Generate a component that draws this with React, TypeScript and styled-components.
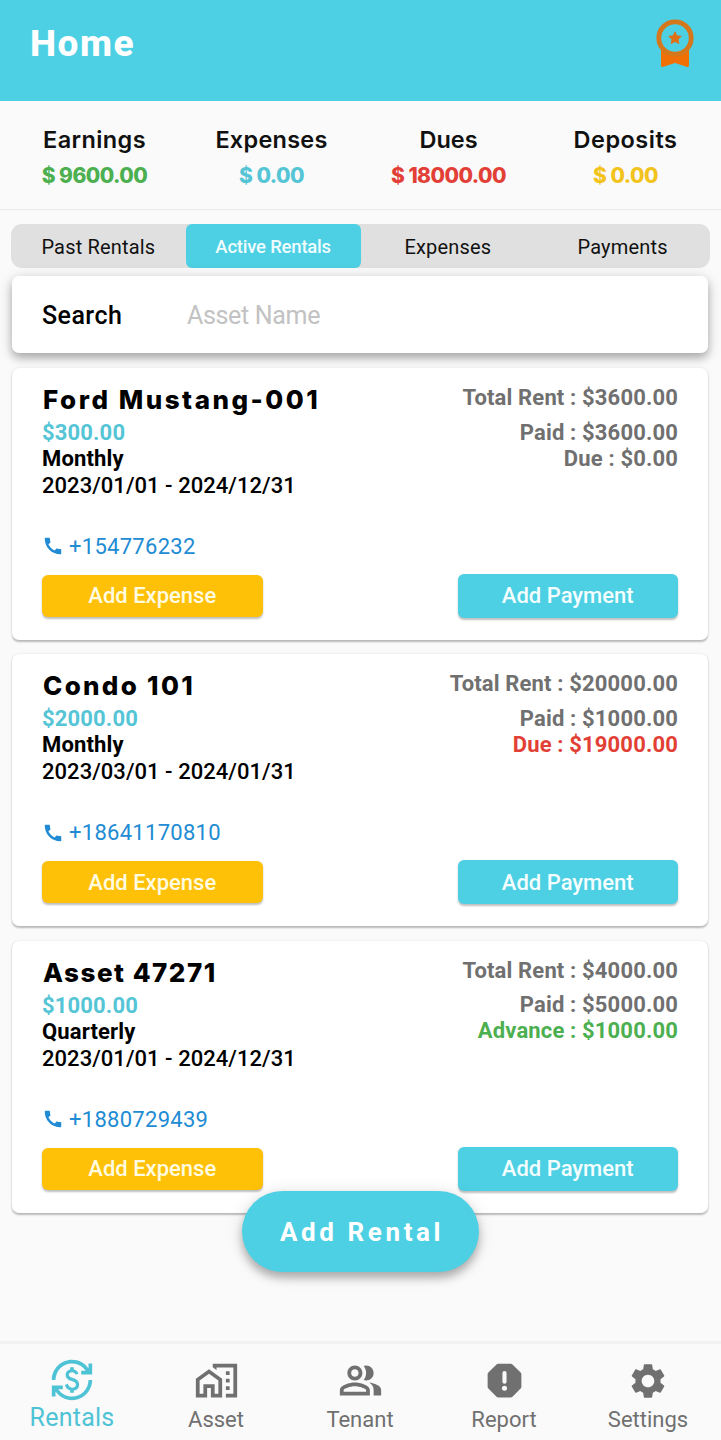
import React from "react";
import styled, { createGlobalStyle } from "styled-components";
import { MdCall, MdCurrencyExchange, MdOutlineHomeWork, MdSettings } from "react-icons/md";

const CYAN = "#4dd0e3";
const AMBER = "#fec107";
const GREEN = "#4caf50";
const RED = "#e23f36";
const GREY = "#707070";

const GlobalStyle = createGlobalStyle`
  * { box-sizing: border-box; }
  body { margin: 0; background: #fafafa; font-family: Roboto, sans-serif; color: #000; }
  button { border: 0; padding: 0; font-family: inherit; }
`;

const Screen = styled.div`
  position: relative;
  display: flex;
  flex-direction: column;
  width: 721px;
  height: 1440px;
  overflow: hidden;
  background: #fafafa;
`;

const Header = styled.header`
  display: flex;
  flex: none;
  justify-content: space-between;
  align-items: flex-start;
  height: 101px;
  padding: 19px 26px 0 30px;
  background: ${CYAN};
`;

const Title = styled.h1`
  margin: 0;
  font-size: 37px;
  line-height: 50px;
  font-weight: 800;
  letter-spacing: 1.5px;
  color: #fff;
`;

const Summary = styled.section`
  display: grid;
  flex: none;
  grid-template-columns: repeat(4, 1fr);
  height: 109px;
  padding: 24px 7px 0 6px;
  border-bottom: 1px solid #ebebeb;
  font-family: Inter, sans-serif;
`;

const SummaryItem = styled.div`
  display: flex;
  flex-direction: column;
  align-items: center;
`;

const SummaryLabel = styled.span<{ $spacing: number }>`
  font-size: 23.5px;
  line-height: 30px;
  font-weight: 600;
  letter-spacing: ${(p) => p.$spacing}px;
  color: #111;
`;

const SummaryValue = styled.span<{ $color: string }>`
  margin-top: 5px;
  font-size: 21px;
  line-height: 31px;
  font-weight: 800;
  letter-spacing: -0.55px;
  color: ${(p) => p.$color};
`;

const Tabs = styled.nav`
  display: flex;
  flex: none;
  height: 44px;
  margin: 14px 11px 0;
  border-radius: 11px;
  background: #e0e0e0;
`;

const Tab = styled.button<{ $active?: boolean }>`
  flex: 1;
  padding-top: 1px;
  border-radius: 6px;
  background: ${(p) => (p.$active ? CYAN : "transparent")};
  color: ${(p) => (p.$active ? "#effcfe" : "#111")};
  font-size: ${(p) => (p.$active ? 18.5 : 20)}px;
  font-weight: ${(p) => (p.$active ? 500 : 400)};
  letter-spacing: ${(p) => (p.$active ? -0.22 : 0.18)}px;
`;

const SearchBar = styled.label`
  display: flex;
  flex: none;
  align-items: center;
  height: 77px;
  margin: 8px 13px 0 12px;
  padding: 1px 0 0 30px;
  border-radius: 7px;
  background: #fff;
  box-shadow: 0 5px 9px rgba(0, 0, 0, 0.26), 0 2px 16px rgba(0, 0, 0, 0.13);
`;

const SearchLabel = styled.span`
  width: 145px;
  font-size: 25px;
  font-weight: 500;
  letter-spacing: 0.45px;
`;

const SearchInput = styled.input`
  width: 400px;
  padding: 0;
  border: 0;
  outline: 0;
  background: transparent;
  font: 400 25px Roboto, sans-serif;
  letter-spacing: -0.33px;
  &::placeholder { color: #c2c2c2; opacity: 1; }
`;

const RentalList = styled.main`
  position: relative;
  display: flex;
  flex: 1;
  flex-direction: column;
  gap: 14.7px;
  padding: 15px 13px 0 12px;
`;

const Card = styled.article`
  display: flex;
  flex: none;
  flex-direction: column;
  height: 271.8px;
  padding: 13px 30px 0;
  border-radius: 7px;
  background: #fff;
  box-shadow: 0 1.5px 2px rgba(0, 0, 0, 0.25), 0 0 3px rgba(0, 0, 0, 0.06);
`;

const CardBody = styled.div`
  display: flex;
  justify-content: space-between;
  height: 151.4px;
  white-space: nowrap;
`;

const Details = styled.div`
  display: flex;
  flex-direction: column;
`;

const Totals = styled(Details)`
  align-items: flex-end;
`;

const AssetName = styled.h2<{ $spacing: number }>`
  margin: 0 0 0 1px;
  font-family: Inter, sans-serif;
  font-size: 26px;
  line-height: 38px;
  font-weight: 800;
  letter-spacing: ${(p) => p.$spacing}px;
`;

const Line = styled.span<{ $color?: string; $weight: number; $height: number; $spacing?: number }>`
  font-size: 22px;
  line-height: ${(p) => p.$height}px;
  font-weight: ${(p) => p.$weight};
  letter-spacing: ${(p) => p.$spacing ?? 0.15}px;
  color: ${(p) => p.$color ?? "#000"};
`;

const TotalRent = styled(Line)`
  margin-bottom: 3.5px;
`;

const Phone = styled.a`
  display: flex;
  align-items: center;
  height: 28px;
  color: #218bd3;
  font-size: 22px;
  letter-spacing: 0.28px;
  svg { margin-right: 5px; }
`;

const Actions = styled.div`
  display: flex;
  justify-content: space-between;
  align-items: center;
  height: 44px;
  margin-top: 13.5px;
`;

const ActionButton = styled.button<{ $color: string; $height: number; $text: string }>`
  width: 220.5px;
  height: ${(p) => p.$height}px;
  border-radius: 6px;
  background: ${(p) => p.$color};
  color: ${(p) => p.$text};
  font-size: 22px;
  font-weight: 500;
  box-shadow: 0 1.5px 2px rgba(0, 0, 0, 0.25);
`;

const AddRental = styled.button`
  position: absolute;
  left: 242px;
  top: 1191px;
  width: 237px;
  height: 81px;
  padding-left: 3px;
  border-radius: 41px;
  background: ${CYAN};
  color: #fff;
  font-size: 26px;
  font-weight: 700;
  letter-spacing: 3.6px;
  box-shadow: 0 6px 9px rgba(0, 0, 0, 0.26), 0 2px 18px rgba(0, 0, 0, 0.12);
`;

const BottomNav = styled.nav`
  display: flex;
  flex: none;
  height: 99px;
  padding-right: 1px;
  border-top: 3px solid #f1f1f1;
  background: #fafafa;
`;

const NavItem = styled.a<{ $active?: boolean }>`
  display: flex;
  flex: 1;
  flex-direction: column;
  align-items: center;
  padding-top: 14px;
  color: ${(p) => (p.$active ? "#4fc3d6" : GREY)};
  font-size: ${(p) => (p.$active ? 25 : 22)}px;
  line-height: ${(p) => (p.$active ? 32 : 34)}px;
  letter-spacing: ${(p) => (p.$active ? 0.25 : 0)}px;
  svg { flex: none; }
`;

const GearIcon = styled(MdSettings)`
  margin: 1.5px;
`;

const MedalIcon = () => (
  <svg width="40" height="50" viewBox="0 0 40 50">
    <path d="M6 28H34V46.6Q34 48.3 32.3 47.9L20 44L7.7 47.9Q6 48.3 6 46.6Z" fill="#f07005" />
    <circle cx="20" cy="19" r="16.2" fill={CYAN} stroke="#d5771b" strokeWidth="4.8" />
    <path
      d="M20 12.8l1.9 4 4.4.5-3.25 3 .85 4.35L20 22.5l-3.9 2.15.85-4.35-3.25-3 4.4-.5z"
      fill="#df6f13"
      stroke="#df6f13"
      strokeWidth=".8"
      strokeLinejoin="round"
    />
  </svg>
);

const PeopleIcon = () => (
  <svg width="45" height="45" viewBox="0 0 24 24" fill="currentColor">
    <path d="M16.67 13.13C18.04 14.06 19 15.32 19 17v3h4v-3c0-2.18-3.57-3.47-6.33-3.87z" />
    <path d="M15 12c2.21 0 4-1.79 4-4s-1.79-4-4-4c-.47 0-.91.1-1.33.24C14.5 5.27 15 6.58 15 8s-.5 2.73-1.33 3.76c.42.14.86.24 1.33.24z" />
    <path d="M9 12c2.21 0 4-1.79 4-4s-1.79-4-4-4-4 1.79-4 4 1.79 4 4 4zm0-6c1.1 0 2 .9 2 2s-.9 2-2 2-2-.9-2-2 .9-2 2-2z" />
    <path d="M9 13c-2.67 0-8 1.34-8 4v3h16v-3c0-2.66-5.33-4-8-4zm6 5H3v-.99C3.2 16.29 6.3 15 9 15s5.8 1.29 6 2v1z" />
  </svg>
);

const ReportIcon = () => (
  <svg width="45" height="45" viewBox="0 0 24 24" fill="currentColor">
    <path d="M8.7 3h6.6q.55 0 .95.4l4.35 4.35q.4.4.4.95v6.6q0 .55-.4.95l-4.35 4.35q-.4.4-.95.4H8.7q-.55 0-.95-.4L3.4 16.25q-.4-.4-.4-.95V8.7q0-.55.4-.95L7.75 3.4q.4-.4.95-.4z" />
    <path d="M12 8v4.600" stroke="#fafafa" strokeWidth="2.2" strokeLinecap="round" />
    <circle cx="12" cy="16.1" r="1.35" fill="#fafafa" />
  </svg>
);

const summary = [
  { label: "Earnings", value: "$ 9600.00", color: GREEN, spacing: 0.4 },
  { label: "Expenses", value: "$ 0.00", color: "#55c5d6", spacing: 0.25 },
  { label: "Dues", value: "$ 18000.00", color: RED, spacing: 0 },
  { label: "Deposits", value: "$ 0.00", color: "#f3c31d", spacing: 0.5 },
];

const rentals = [
  { name: "Ford Mustang-001", spacing: 2.5, amount: "$300.00", period: "Monthly", dates: "2023/01/01 - 2024/12/31", phone: "+154776232", total: "$3600.00", paid: "$3600.00", balance: "Due : $0.00", color: GREY },
  { name: "Condo 101", spacing: 2.3, amount: "$2000.00", period: "Monthly", dates: "2023/03/01 - 2024/01/31", phone: "+18641170810", total: "$20000.00", paid: "$1000.00", balance: "Due : $19000.00", color: RED },
  { name: "Asset 47271", spacing: 1.5, amount: "$1000.00", period: "Quarterly", dates: "2023/01/01 - 2024/12/31", phone: "+1880729439", total: "$4000.00", paid: "$5000.00", balance: "Advance : $1000.00", color: GREEN },
];

export default function App() {
  return (
    <Screen>
      <GlobalStyle />
      <Header>
        <Title>Home</Title>
        <MedalIcon />
      </Header>
      <Summary>
        {summary.map((s) => (
          <SummaryItem key={s.label}>
            <SummaryLabel $spacing={s.spacing}>{s.label}</SummaryLabel>
            <SummaryValue $color={s.color}>{s.value}</SummaryValue>
          </SummaryItem>
        ))}
      </Summary>
      <Tabs>
        <Tab>Past Rentals</Tab>
        <Tab $active>Active Rentals</Tab>
        <Tab>Expenses</Tab>
        <Tab>Payments</Tab>
      </Tabs>
      <SearchBar>
        <SearchLabel>Search</SearchLabel>
        <SearchInput placeholder="Asset Name" />
      </SearchBar>
      <RentalList>
        {rentals.map((r) => (
          <Card key={r.name}>
            <CardBody>
              <Details>
                <AssetName $spacing={r.spacing}>{r.name}</AssetName>
                <Line $weight={700} $height={27} $color="#55c5d6">{r.amount}</Line>
                <Line $weight={700} $height={26}>{r.period}</Line>
                <Line $weight={500} $height={28} $spacing={0.04}>{r.dates}</Line>
              </Details>
              <Totals>
                <TotalRent $weight={700} $height={34} $color={GREY}>Total Rent : {r.total}</TotalRent>
                <Line $weight={700} $height={27} $color={GREY}>Paid : {r.paid}</Line>
                <Line $weight={700} $height={26} $color={r.color}>{r.balance}</Line>
              </Totals>
            </CardBody>
            <Phone>
              <MdCall size={22} />
              {r.phone}
            </Phone>
            <Actions>
              <ActionButton $color={AMBER} $height={42} $text="#fffbe0">Add Expense</ActionButton>
              <ActionButton $color={CYAN} $height={44} $text="#f4feff">Add Payment</ActionButton>
            </Actions>
          </Card>
        ))}
      </RentalList>
      <AddRental>Add Rental</AddRental>
      <BottomNav>
        <NavItem $active><MdCurrencyExchange size={44} />Rentals</NavItem>
        <NavItem><MdOutlineHomeWork size={45} />Asset</NavItem>
        <NavItem><PeopleIcon />Tenant</NavItem>
        <NavItem><ReportIcon />Report</NavItem>
        <NavItem><GearIcon size={42} />Settings</NavItem>
      </BottomNav>
    </Screen>
  );
}
